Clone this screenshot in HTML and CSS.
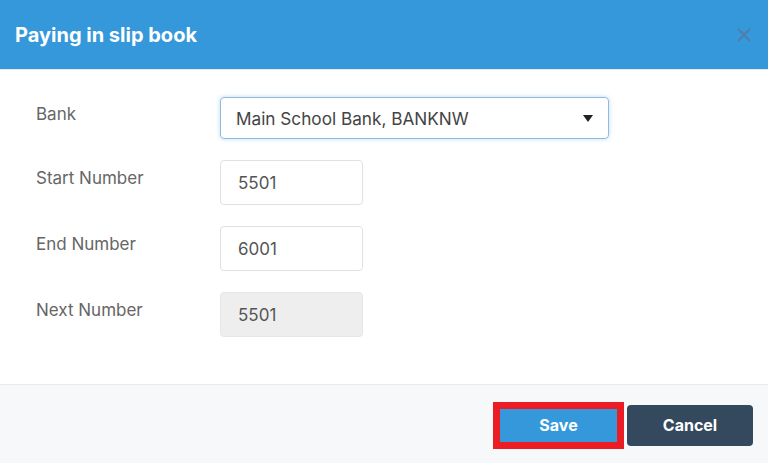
FILE: index.html
```html
<!DOCTYPE html>
<html>
<head>
<meta charset="utf-8">
<link rel="stylesheet" href="styles.css">
</head>
<body>
<div class="modal">
  <div class="modal-header">
    <h1 class="modal-title">Paying in slip book</h1>
    <span class="close-btn">
      <svg width="14" height="14" viewBox="0 0 14 14"><path d="M1 1L13 13M13 1L1 13" stroke="currentColor" stroke-width="2" fill="none"/></svg>
    </span>
  </div>
  <div class="modal-body">
    <div class="form-row">
      <label class="form-label">Bank</label>
      <div class="select-box">
        <span class="select-text">Main School Bank, BANKNW</span>
        <svg class="caret" width="10" height="7" viewBox="0 0 10 7"><path d="M0 0H10L5 7Z" fill="#222"/></svg>
      </div>
    </div>
    <div class="form-row">
      <label class="form-label">Start Number</label>
      <div class="text-input">5501</div>
    </div>
    <div class="form-row">
      <label class="form-label">End Number</label>
      <div class="text-input">6001</div>
    </div>
    <div class="form-row">
      <label class="form-label">Next Number</label>
      <div class="text-input disabled">5501</div>
    </div>
  </div>
  <div class="modal-footer">
    <button class="btn btn-save">Save</button>
    <button class="btn btn-cancel">Cancel</button>
  </div>
</div>
</body>
</html>
```

FILE: styles.css
```css
html, body {
  margin: 0;
  padding: 0;
}
body {
  width: 768px;
  height: 463px;
  overflow: hidden;
  background: #fff;
  font-family: Inter, "Noto Sans", "Liberation Sans", sans-serif;
}
.modal {
  display: flex;
  flex-direction: column;
  height: 463px;
}
.modal-header {
  height: 69px;
  background: #3598db;
  border-bottom: 1px solid #e6e9ec;
  display: flex;
  align-items: center;
  justify-content: space-between;
  padding: 0 17px 0 15px;
}
.modal-title {
  margin: 0;
  color: #fff;
  font-size: 20px;
  font-weight: 700;
  letter-spacing: 0;
}
.close-btn {
  color: #4f7ea7;
  display: flex;
  margin-top: 1px;
}
.modal-body {
  height: 287px;
  padding: 27px 0 0 36px;
  display: flex;
  flex-direction: column;
  gap: 21px;
}
.form-row {
  display: flex;
  align-items: flex-start;
}
.form-label {
  width: 184px;
  font-size: 17px;
  line-height: 20px;
  padding-top: 8px;
  color: #666;
}
.form-row:first-child .form-label {
  padding-top: 7px;
}
.select-box {
  box-sizing: border-box;
  width: 389px;
  height: 42px;
  border: 1px solid #8fbbe3;
  border-radius: 4px;
  box-shadow: 0 0 4px rgba(53, 152, 219, 0.35);
  display: flex;
  align-items: center;
  justify-content: space-between;
  padding: 0 15px 0 15px;
  font-size: 17.2px;
  color: #444;
}
.text-input {
  box-sizing: border-box;
  width: 143px;
  height: 45px;
  border: 1px solid #e1e1e1;
  border-radius: 4px;
  padding: 0 17px;
  display: flex;
  align-items: center;
  font-size: 17px;
  color: #555;
  background: #fff;
}
.text-input.disabled {
  background: #eee;
  border-color: #e6e6e6;
}
.modal-footer {
  flex: 1;
  background: #f7f8fa;
  border-top: 1px solid #eaeaea;
  display: flex;
  justify-content: flex-end;
  align-items: center;
  gap: 10px;
  padding: 2px 15px 0 0;
}
.btn {
  border: none;
  color: #fff;
  font-family: inherit;
  font-size: 16px;
  font-weight: 700;
  border-radius: 4px;
  padding: 0;
}
.btn-save {
  width: 117px;
  height: 33px;
  background: #3598db;
  border-radius: 0;
  outline: 7px solid #ec1c24;
}
.btn-cancel {
  width: 126px;
  height: 41px;
  background: #34495e;
}
```
